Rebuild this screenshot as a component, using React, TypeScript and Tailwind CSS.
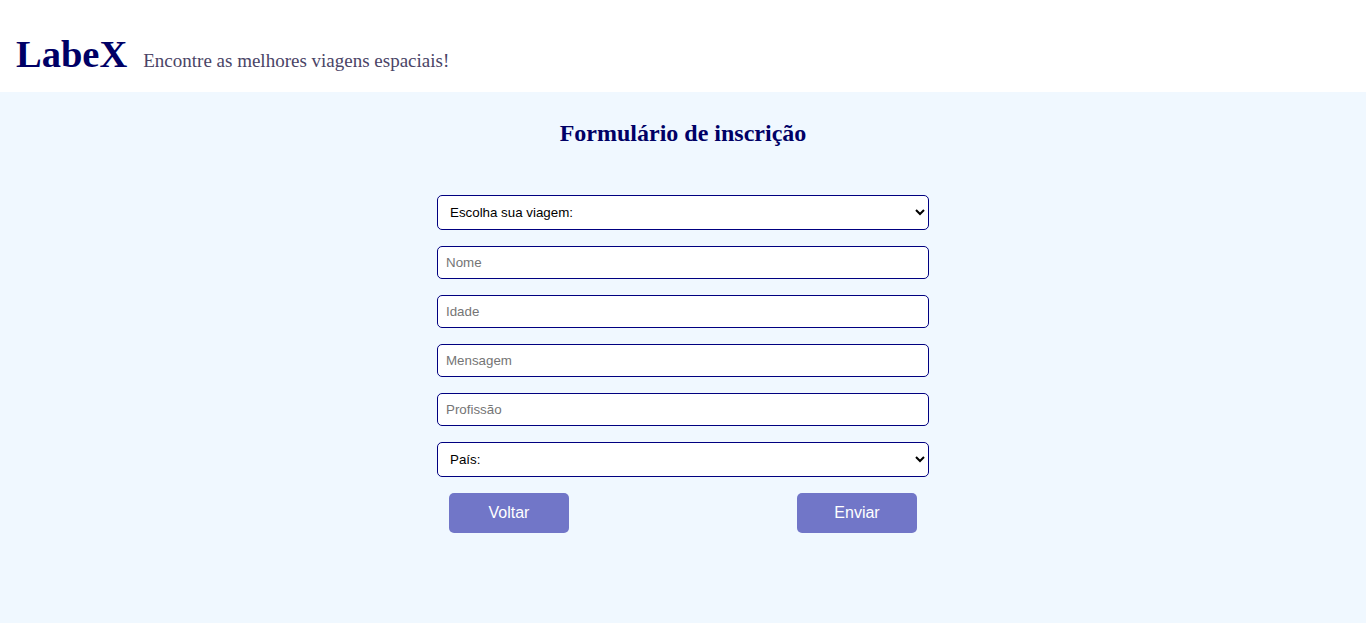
import { useState } from "react";

const fieldBase =
  "w-full rounded-[5px] border border-[#000080] bg-white text-[13.33px] text-black outline-none font-['Liberation_Sans',Arial,sans-serif]";

export default function App() {
  const [trip, setTrip] = useState("");
  const [country, setCountry] = useState("");

  return (
    <div className="min-h-[623px] bg-[#f0f8ff] font-['Liberation_Serif','Times_New_Roman',serif]">
      <header className="flex h-[92px] items-baseline gap-4 bg-white px-4 pt-[31px]">
        <h1 className="text-[38.5px] font-bold leading-[46px] text-[#000066]">LabeX</h1>
        <p className="text-[19px] text-[#4a4466]">Encontre as melhores viagens espaciais!</p>
      </header>

      <main className="flex flex-col items-center">
        <h2 className="mt-[27px] text-[24px] font-bold leading-[28px] text-[#000066]">
          Formulário de inscrição
        </h2>

        <form className="mt-[48px] flex w-[492px] flex-col gap-4" onSubmit={(e) => e.preventDefault()}>
          <select
            value={trip}
            onChange={(e) => setTrip(e.target.value)}
            className={`${fieldBase} h-[35px] px-2`}
          >
            <option value="">Escolha sua viagem:</option>
          </select>
          <input placeholder="Nome" className={`${fieldBase} h-[33px] px-2 placeholder:text-[#757575]`} />
          <input placeholder="Idade" className={`${fieldBase} h-[33px] px-2 placeholder:text-[#757575]`} />
          <input placeholder="Mensagem" className={`${fieldBase} h-[33px] px-2 placeholder:text-[#757575]`} />
          <input placeholder="Profissão" className={`${fieldBase} h-[33px] px-2 placeholder:text-[#757575]`} />
          <select
            value={country}
            onChange={(e) => setCountry(e.target.value)}
            className={`${fieldBase} h-[35px] px-2`}
          >
            <option value="">País:</option>
          </select>

          <div className="flex justify-between px-3">
            <button
              type="button"
              className="h-10 w-[120px] rounded-[5px] bg-[#7176c8] font-['Liberation_Sans',Arial,sans-serif] text-base text-white"
            >
              Voltar
            </button>
            <button
              type="submit"
              className="h-10 w-[120px] rounded-[5px] bg-[#7176c8] font-['Liberation_Sans',Arial,sans-serif] text-base text-white"
            >
              Enviar
            </button>
          </div>
        </form>
      </main>
    </div>
  );
}
